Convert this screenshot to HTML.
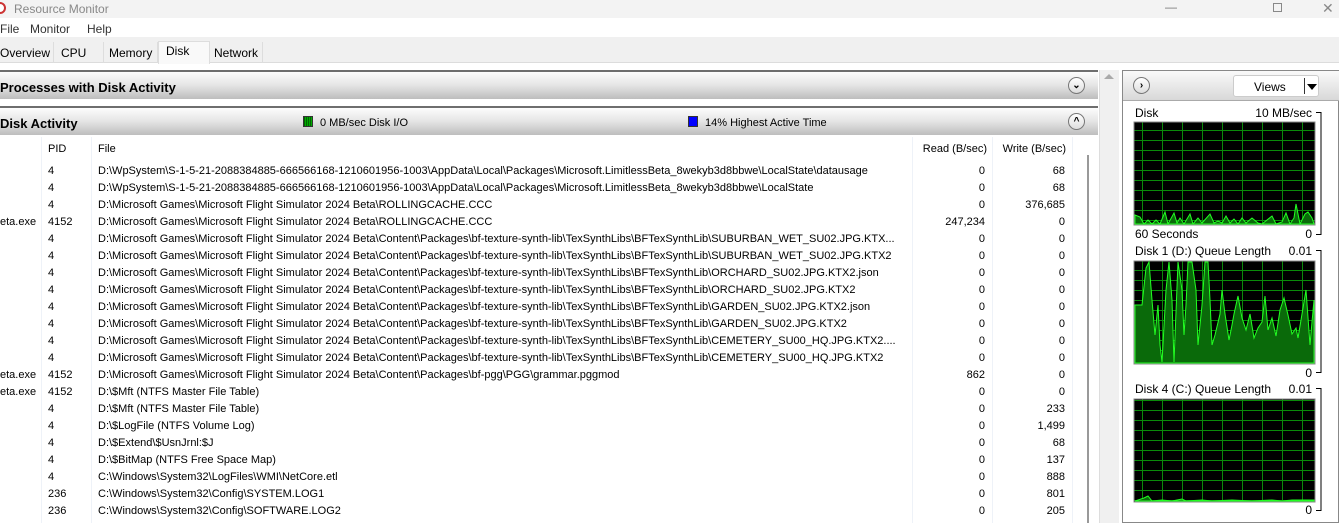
<!DOCTYPE html>
<html><head><meta charset="utf-8"><style>
*{margin:0;padding:0;box-sizing:border-box}
body{width:1339px;height:523px;overflow:hidden;background:#fff;font-family:"Liberation Sans",sans-serif;font-size:11px;color:#000;position:relative}
.abs{position:absolute}
.title{left:0;top:0;width:1339px;height:18px;background:#f3f3f3;color:#888;font-size:12px}
.menu{left:0;top:18px;width:1339px;height:19px;background:#fff;font-size:12px;color:#333}
.tabs{left:0;top:37px;width:1339px;height:26px;background:#f0f0f0;border-bottom:1px solid #dcdcdc}
.tab{position:absolute;top:9px;font-size:12px}
.bar{left:0;width:1098px;height:29px;background:linear-gradient(#fdfdfd,#e4e4e4 50%,#bdbdbd);border-top:2px solid #6e6e6e;font-weight:bold;font-size:13px}
.circ{position:absolute;width:17px;height:17px;border:1px solid #777;border-radius:50%;background:linear-gradient(#fff,#ddd);font-size:10px;text-align:center;line-height:15px;font-weight:bold}
.row{position:absolute;left:0;width:1072px;height:17px}
.row span{position:absolute;top:2px;white-space:nowrap}
.r{text-align:right}
</style></head><body>
<div class="abs title"><div class="abs" style="left:-6px;top:2px;width:12px;height:12px;border-radius:50%;border:2px solid #c33;background:#fff"></div><span class="abs" style="left:14px;top:2px">Resource Monitor</span>
<span class="abs" style="left:1165px;top:0px;color:#777">—</span><span class="abs" style="left:1273px;top:3px;width:9px;height:9px;border:1px solid #888"></span><span class="abs" style="left:1322px;top:0px;color:#888;font-size:14px">✕</span></div>
<div class="abs menu"><span class="abs" style="left:0;top:4px">File</span><span class="abs" style="left:30px;top:4px">Monitor</span><span class="abs" style="left:87px;top:4px">Help</span></div>
<div class="abs tabs">
<div class="abs" style="left:0;top:5px;width:54px;height:21px;border-right:1px solid #ddd"></div>
<div class="abs" style="left:103px;top:5px;width:55px;height:21px;border-left:1px solid #ddd;border-right:1px solid #ddd"></div>
<div class="abs" style="left:158px;top:4px;width:52px;height:23px;background:#f9f9f9;border:1px solid #ddd;border-bottom:none"></div>
<div class="abs" style="left:209px;top:5px;width:54px;height:21px;border-right:1px solid #ddd"></div>
<span class="tab" style="left:0">Overview</span><span class="tab" style="left:61px">CPU</span><span class="tab" style="left:109px">Memory</span><span class="tab" style="left:166px;top:7px">Disk</span><span class="tab" style="left:214px">Network</span></div>
<div class="abs" style="left:0;top:64px;width:1339px;height:459px;background:#fff"></div>
<div class="abs bar" style="top:70px"><span class="abs" style="left:0;top:8px">Processes with Disk Activity</span><div class="circ" style="left:1068px;top:5px">⌄</div></div>
<div class="abs bar" style="top:106px"><span class="abs" style="left:0;top:8px">Disk Activity</span>
<div class="abs" style="left:303px;top:8px;width:10px;height:11px;background:repeating-linear-gradient(90deg,#060 0 1px,#0a0 1px 2px);border:1px solid #333"></div><span class="abs" style="left:320px;top:9px;font-weight:normal;font-size:11px">0 MB/sec Disk I/O</span>
<div class="abs" style="left:688px;top:8px;width:10px;height:11px;background:#00f;border:1px solid #333"></div><span class="abs" style="left:705px;top:9px;font-weight:normal;font-size:11px">14% Highest Active Time</span>
<div class="circ" style="left:1068px;top:5px">^</div></div>
<div class="abs" style="left:41px;top:137px;width:1px;height:386px;background:#eef2f8"></div>
<div class="abs" style="left:91px;top:137px;width:1px;height:386px;background:#eef2f8"></div>
<div class="abs" style="left:912px;top:137px;width:1px;height:386px;background:#eef2f8"></div>
<div class="abs" style="left:992px;top:137px;width:1px;height:386px;background:#eef2f8"></div>
<div class="abs" style="left:1072px;top:137px;width:1px;height:386px;background:#eef2f8"></div>
<div class="abs" style="left:1087px;top:155px;width:2px;height:368px;background:#999"></div>
<div class="abs" style="left:1099px;top:70px;width:20px;height:453px;background:#f0f0f0;border-left:1px solid #ddd"></div>
<div class="abs" style="left:1104px;top:74px;width:0;height:0;border-left:5px solid transparent;border-right:5px solid transparent;border-bottom:5px solid #aaa"></div>
<div class="row" style="top:141px;height:20px"><span style="left:48px">PID</span><span style="left:98px">File</span><span class="r" style="left:912px;width:75px">Read (B/sec)</span><span class="r" style="left:992px;width:74px">Write (B/sec)</span></div>
<!-- right panel -->
<div class="abs" style="left:1122px;top:70px;width:217px;height:453px;border:1px solid #888;background:#fff"></div>
<div class="abs" style="left:1123px;top:71px;width:216px;height:30px;background:linear-gradient(#fafafa,#d8d8d8);border-bottom:1px solid #aaa"></div>
<div class="circ" style="left:1133px;top:77px">›</div>
<div class="abs" style="left:1233px;top:75px;width:86px;height:22px;background:#fff;border:1px solid #ccc;border-radius:3px;font-size:12px"><span class="abs" style="left:20px;top:4px">Views</span><div class="abs" style="left:70px;top:2px;width:1px;height:16px;background:#333"></div><div class="abs" style="left:73px;top:8px;border-left:5px solid transparent;border-right:5px solid transparent;border-top:6px solid #000"></div></div>
<svg class="abs" style="left:1122px;top:100px" width="217" height="423" font-family="Liberation Sans" font-size="12">
<defs><pattern id="g" width="20" height="10" patternUnits="userSpaceOnUse"><rect width="20" height="10" fill="#000"/><path d="M0 0.5H20M0.5 0V10" stroke="#0a8a0a" stroke-width="1"/></pattern></defs>
<text x="13" y="17">Disk</text><text x="190" y="17" text-anchor="end">10 MB/sec</text>
<rect x="12" y="22" width="181" height="103" fill="url(#g)" stroke="#888"/>
<path d="M13 124L13 115L18 117L22 124L26 120L30 124L34 120L38 124L43 112L46 124L52 113L55 123L58 118L62 124L68 114L71 124L76 118L80 123L88 114L92 123L96 121L100 123L104 116L108 123L112 119L116 124L120 118L124 123L130 118L136 123L140 124L150 116L154 124L160 122L164 113L168 124L172 118L174 104L178 124L183 114L186 112L190 118L192 124Z" fill="#0a6a0a" stroke="#2f2" stroke-width="1"/>
<text x="13" y="138">60 Seconds</text><text x="190" y="138" text-anchor="end">0</text>
<path d="M194 12.5H199V134.5H194" fill="none" stroke="#000"/>
<text x="13" y="155">Disk 1 (D:) Queue Length</text><text x="190" y="155" text-anchor="end">0.01</text>
<rect x="12" y="161" width="181" height="103" fill="url(#g)" stroke="#888"/>
<path d="M13 263L13 205L20 205L24 168L27 162L30 200L33 235L36 205L38 245L40 262L44 190L47 162L50 200L52 262L56 162L60 190L62 235L64 205L66 162L70 162L74 190L76 245L80 205L83 162L86 162L88 200L90 245L93 235L98 214L100 190L103 214L107 240L110 225L112 214L116 196L120 218L124 230L128 214L132 238L136 228L140 222L143 196L146 230L150 218L154 236L158 210L162 198L166 215L170 234L174 228L176 238L180 214L184 190L188 245L190 222L192 200V263Z" fill="#0a6a0a" stroke="#2f2" stroke-width="1"/>
<text x="190" y="277" text-anchor="end">0</text>
<path d="M194 150.5H199V272.5H194" fill="none" stroke="#000"/>
<text x="13" y="293">Disk 4 (C:) Queue Length</text><text x="190" y="293" text-anchor="end">0.01</text>
<rect x="12" y="299" width="181" height="103" fill="url(#g)" stroke="#888"/>
<path d="M13 401L22 398L26 396L30 401L40 400L50 401L60 399L64 401L80 400L90 401L110 400L130 401L150 400L160 401L170 400L192 400V401Z" fill="#0a6a0a" stroke="#2f2"/>
<text x="190" y="414" text-anchor="end">0</text>
<path d="M194 288.5H199V410.5H194" fill="none" stroke="#000"/>
</svg>
<div class="abs" style="left:0;top:163px;width:1072px">
<div class="row" style="top:0"><span style="left:48px">4</span><span style="left:98px">D:\WpSystem\S-1-5-21-2088384885-666566168-1210601956-1003\AppData\Local\Packages\Microsoft.LimitlessBeta_8wekyb3d8bbwe\LocalState\datausage</span><span class="r" style="left:912px;width:73px">0</span><span class="r" style="left:992px;width:73px">68</span></div>
<div class="row" style="top:17px"><span style="left:48px">4</span><span style="left:98px">D:\WpSystem\S-1-5-21-2088384885-666566168-1210601956-1003\AppData\Local\Packages\Microsoft.LimitlessBeta_8wekyb3d8bbwe\LocalState</span><span class="r" style="left:912px;width:73px">0</span><span class="r" style="left:992px;width:73px">68</span></div>
<div class="row" style="top:34px"><span style="left:48px">4</span><span style="left:98px">D:\Microsoft Games\Microsoft Flight Simulator 2024 Beta\ROLLINGCACHE.CCC</span><span class="r" style="left:912px;width:73px">0</span><span class="r" style="left:992px;width:73px">376,685</span></div>
<div class="row" style="top:51px"><span style="left:0">eta.exe</span><span style="left:48px">4152</span><span style="left:98px">D:\Microsoft Games\Microsoft Flight Simulator 2024 Beta\ROLLINGCACHE.CCC</span><span class="r" style="left:912px;width:73px">247,234</span><span class="r" style="left:992px;width:73px">0</span></div>
<div class="row" style="top:68px"><span style="left:48px">4</span><span style="left:98px">D:\Microsoft Games\Microsoft Flight Simulator 2024 Beta\Content\Packages\bf-texture-synth-lib\TexSynthLibs\BFTexSynthLib\SUBURBAN_WET_SU02.JPG.KTX...</span><span class="r" style="left:912px;width:73px">0</span><span class="r" style="left:992px;width:73px">0</span></div>
<div class="row" style="top:85px"><span style="left:48px">4</span><span style="left:98px">D:\Microsoft Games\Microsoft Flight Simulator 2024 Beta\Content\Packages\bf-texture-synth-lib\TexSynthLibs\BFTexSynthLib\SUBURBAN_WET_SU02.JPG.KTX2</span><span class="r" style="left:912px;width:73px">0</span><span class="r" style="left:992px;width:73px">0</span></div>
<div class="row" style="top:102px"><span style="left:48px">4</span><span style="left:98px">D:\Microsoft Games\Microsoft Flight Simulator 2024 Beta\Content\Packages\bf-texture-synth-lib\TexSynthLibs\BFTexSynthLib\ORCHARD_SU02.JPG.KTX2.json</span><span class="r" style="left:912px;width:73px">0</span><span class="r" style="left:992px;width:73px">0</span></div>
<div class="row" style="top:119px"><span style="left:48px">4</span><span style="left:98px">D:\Microsoft Games\Microsoft Flight Simulator 2024 Beta\Content\Packages\bf-texture-synth-lib\TexSynthLibs\BFTexSynthLib\ORCHARD_SU02.JPG.KTX2</span><span class="r" style="left:912px;width:73px">0</span><span class="r" style="left:992px;width:73px">0</span></div>
<div class="row" style="top:136px"><span style="left:48px">4</span><span style="left:98px">D:\Microsoft Games\Microsoft Flight Simulator 2024 Beta\Content\Packages\bf-texture-synth-lib\TexSynthLibs\BFTexSynthLib\GARDEN_SU02.JPG.KTX2.json</span><span class="r" style="left:912px;width:73px">0</span><span class="r" style="left:992px;width:73px">0</span></div>
<div class="row" style="top:153px"><span style="left:48px">4</span><span style="left:98px">D:\Microsoft Games\Microsoft Flight Simulator 2024 Beta\Content\Packages\bf-texture-synth-lib\TexSynthLibs\BFTexSynthLib\GARDEN_SU02.JPG.KTX2</span><span class="r" style="left:912px;width:73px">0</span><span class="r" style="left:992px;width:73px">0</span></div>
<div class="row" style="top:170px"><span style="left:48px">4</span><span style="left:98px">D:\Microsoft Games\Microsoft Flight Simulator 2024 Beta\Content\Packages\bf-texture-synth-lib\TexSynthLibs\BFTexSynthLib\CEMETERY_SU00_HQ.JPG.KTX2....</span><span class="r" style="left:912px;width:73px">0</span><span class="r" style="left:992px;width:73px">0</span></div>
<div class="row" style="top:187px"><span style="left:48px">4</span><span style="left:98px">D:\Microsoft Games\Microsoft Flight Simulator 2024 Beta\Content\Packages\bf-texture-synth-lib\TexSynthLibs\BFTexSynthLib\CEMETERY_SU00_HQ.JPG.KTX2</span><span class="r" style="left:912px;width:73px">0</span><span class="r" style="left:992px;width:73px">0</span></div>
<div class="row" style="top:204px"><span style="left:0">eta.exe</span><span style="left:48px">4152</span><span style="left:98px">D:\Microsoft Games\Microsoft Flight Simulator 2024 Beta\Content\Packages\bf-pgg\PGG\grammar.pggmod</span><span class="r" style="left:912px;width:73px">862</span><span class="r" style="left:992px;width:73px">0</span></div>
<div class="row" style="top:221px"><span style="left:0">eta.exe</span><span style="left:48px">4152</span><span style="left:98px">D:\$Mft (NTFS Master File Table)</span><span class="r" style="left:912px;width:73px">0</span><span class="r" style="left:992px;width:73px">0</span></div>
<div class="row" style="top:238px"><span style="left:48px">4</span><span style="left:98px">D:\$Mft (NTFS Master File Table)</span><span class="r" style="left:912px;width:73px">0</span><span class="r" style="left:992px;width:73px">233</span></div>
<div class="row" style="top:255px"><span style="left:48px">4</span><span style="left:98px">D:\$LogFile (NTFS Volume Log)</span><span class="r" style="left:912px;width:73px">0</span><span class="r" style="left:992px;width:73px">1,499</span></div>
<div class="row" style="top:272px"><span style="left:48px">4</span><span style="left:98px">D:\$Extend\$UsnJrnl:$J</span><span class="r" style="left:912px;width:73px">0</span><span class="r" style="left:992px;width:73px">68</span></div>
<div class="row" style="top:289px"><span style="left:48px">4</span><span style="left:98px">D:\$BitMap (NTFS Free Space Map)</span><span class="r" style="left:912px;width:73px">0</span><span class="r" style="left:992px;width:73px">137</span></div>
<div class="row" style="top:306px"><span style="left:48px">4</span><span style="left:98px">C:\Windows\System32\LogFiles\WMI\NetCore.etl</span><span class="r" style="left:912px;width:73px">0</span><span class="r" style="left:992px;width:73px">888</span></div>
<div class="row" style="top:323px"><span style="left:48px">236</span><span style="left:98px">C:\Windows\System32\Config\SYSTEM.LOG1</span><span class="r" style="left:912px;width:73px">0</span><span class="r" style="left:992px;width:73px">801</span></div>
<div class="row" style="top:340px"><span style="left:48px">236</span><span style="left:98px">C:\Windows\System32\Config\SOFTWARE.LOG2</span><span class="r" style="left:912px;width:73px">0</span><span class="r" style="left:992px;width:73px">205</span></div>
</div>
</body></html>
